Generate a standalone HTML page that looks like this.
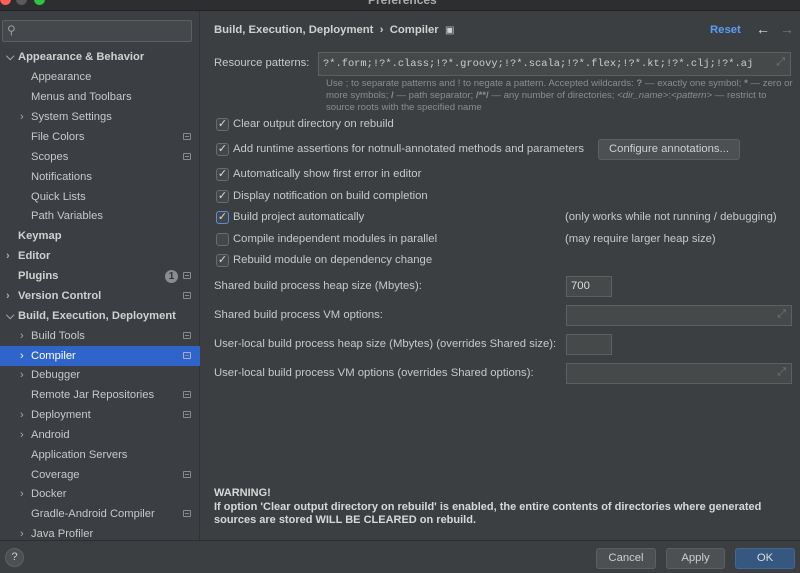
<!DOCTYPE html>
<html><head><style>
*{margin:0;padding:0;box-sizing:border-box}
body{width:800px;height:573px;overflow:hidden;background:#3c3f41;font-family:"Liberation Sans",sans-serif;font-size:11.3px;color:#bbbbbb;position:relative}
.a{position:absolute;white-space:nowrap}
#title{left:0;top:0;width:800px;height:11px;background:#2d2e30;border-bottom:1px solid #222;overflow:hidden}
#side{left:0;top:11px;width:200px;height:529px;background:#3b3e43;border-right:1px solid #323232}
.it{position:absolute;left:0;width:200px;height:20px;line-height:20px;font-size:11.2px;color:#c8c8c8}
.b{font-weight:bold;color:#d0d0d0}
.ic{position:absolute;right:9px;top:6px;width:8px;height:7px;border:1px solid #8a8a8a;border-radius:1px}
.ic:after{content:"";position:absolute;left:1px;top:2px;width:4px;height:1px;background:#8a8a8a}
.chev{position:absolute;font-size:11px;color:#aaa}
.cb{position:absolute;width:13px;height:13px;border:1px solid #6b6b6b;border-radius:3px;background:#43464a;color:#ddd;font-size:11px;line-height:11px;text-align:center}
.lbl{position:absolute;color:#c8c8c8;font-size:11.3px;white-space:nowrap}
.field{position:absolute;background:#45494a;border:1px solid #5e6060}
.btn{position:absolute;height:21px;border:1px solid #5e6060;background:#4c5052;border-radius:3px;color:#cfcfcf;text-align:center;line-height:19px;font-size:11.3px}
</style></head><body>
<div class="a" id="title">
<span class="a" style="left:0;top:-6px;width:11px;height:11px;border-radius:50%;background:#fe5f57"></span>
<span class="a" style="left:16px;top:-6px;width:11px;height:11px;border-radius:50%;background:#5a5a5c"></span>
<span class="a" style="left:34px;top:-6px;width:11px;height:11px;border-radius:50%;background:#28c840"></span>
<span class="a" style="left:368px;top:-7px;font-weight:bold;color:#aaa;font-size:12px">Preferences</span>
</div>
<div class="a" id="side">
<div class="a" style="left:2px;top:9px;width:190px;height:22px;border:1px solid #5e6060;background:#45484b;border-radius:2px"><span class="a" style="left:4px;top:2px;color:#999;font-size:12px">⚲</span></div>
</div>
<div class="it b" style="top:47px"><span class="chev" style="left:6px">⌵</span><span class="a" style="left:18px">Appearance &amp; Behavior</span></div>
<div class="it" style="top:67px"><span class="a" style="left:31px">Appearance</span></div>
<div class="it" style="top:87px"><span class="a" style="left:31px">Menus and Toolbars</span></div>
<div class="it" style="top:107px"><span class="chev" style="left:20px">›</span><span class="a" style="left:31px">System Settings</span></div>
<div class="it" style="top:127px"><span class="a" style="left:31px">File Colors</span><span class="ic"></span></div>
<div class="it" style="top:147px"><span class="a" style="left:31px">Scopes</span><span class="ic"></span></div>
<div class="it" style="top:167px"><span class="a" style="left:31px">Notifications</span></div>
<div class="it" style="top:187px"><span class="a" style="left:31px">Quick Lists</span></div>
<div class="it" style="top:206px"><span class="a" style="left:31px">Path Variables</span></div>
<div class="it b" style="top:226px"><span class="a" style="left:18px">Keymap</span></div>
<div class="it b" style="top:246px"><span class="chev" style="left:6px">›</span><span class="a" style="left:18px">Editor</span></div>
<div class="it b" style="top:266px"><span class="a" style="left:18px">Plugins</span><span class="a" style="left:165px;top:4px;width:13px;height:13px;border-radius:50%;background:#8a8d90;color:#333;font-size:10px;line-height:13px;text-align:center">1</span><span class="ic"></span></div>
<div class="it b" style="top:286px"><span class="chev" style="left:6px">›</span><span class="a" style="left:18px">Version Control</span><span class="ic"></span></div>
<div class="it b" style="top:306px"><span class="chev" style="left:6px">⌵</span><span class="a" style="left:18px">Build, Execution, Deployment</span></div>
<div class="it" style="top:326px"><span class="chev" style="left:20px">›</span><span class="a" style="left:31px">Build Tools</span><span class="ic"></span></div>
<div class="it" style="top:346px;background:#2f65ca;color:#fff"><span class="chev" style="left:20px;color:#fff">›</span><span class="a" style="left:31px">Compiler</span><span class="ic" style="border-color:#aac"></span></div>
<div class="it" style="top:365px"><span class="chev" style="left:20px">›</span><span class="a" style="left:31px">Debugger</span></div>
<div class="it" style="top:385px"><span class="a" style="left:31px">Remote Jar Repositories</span><span class="ic"></span></div>
<div class="it" style="top:405px"><span class="chev" style="left:20px">›</span><span class="a" style="left:31px">Deployment</span><span class="ic"></span></div>
<div class="it" style="top:425px"><span class="chev" style="left:20px">›</span><span class="a" style="left:31px">Android</span></div>
<div class="it" style="top:445px"><span class="a" style="left:31px">Application Servers</span></div>
<div class="it" style="top:465px"><span class="a" style="left:31px">Coverage</span><span class="ic"></span></div>
<div class="it" style="top:484px"><span class="chev" style="left:20px">›</span><span class="a" style="left:31px">Docker</span></div>
<div class="it" style="top:504px"><span class="a" style="left:31px">Gradle-Android Compiler</span><span class="ic"></span></div>
<div class="it" style="top:524px"><span class="chev" style="left:20px">›</span><span class="a" style="left:31px">Java Profiler</span></div>

<span class="a" style="left:214px;top:24px;font-weight:bold;color:#d0d0d0;font-size:11.3px">Build, Execution, Deployment&nbsp;&nbsp;›&nbsp;&nbsp;Compiler&nbsp;&nbsp;<span style="font-weight:normal;font-size:10px">▣</span></span>
<span class="a" style="left:710px;top:24px;font-weight:bold;color:#589df6">Reset</span>
<span class="a" style="left:756px;top:21px;color:#ddd;font-size:14px">←</span>
<span class="a" style="left:780px;top:21px;color:#777;font-size:14px">→</span>

<span class="lbl" style="left:214px;top:57px">Resource patterns:</span>
<div class="field" style="left:318px;top:52px;width:473px;height:24px;overflow:hidden"><span class="a" style="left:4px;top:5px;font-family:'Liberation Mono',monospace;font-size:10.4px;color:#ccc">?*.form;!?*.class;!?*.groovy;!?*.scala;!?*.flex;!?*.kt;!?*.clj;!?*.aj</span><span class="a" style="right:5px;top:3px;color:#777;font-size:11px">⤢</span></div>
<div class="a" style="left:326px;top:78px;font-size:9.6px;color:#8c8c8c;line-height:12px;white-space:normal;width:470px">Use ; to separate patterns and ! to negate a pattern. Accepted wildcards: <b>?</b> — exactly one symbol; <b>*</b> — zero or more symbols; <b>/</b> — path separator; <b>/**/</b> — any number of directories; <i>&lt;dir_name&gt;</i>:<i>&lt;pattern&gt;</i> — restrict to source roots with the specified name</div>

<span class="cb" style="left:216px;top:118px">✓</span><span class="lbl" style="left:233px;top:118px">Clear output directory on rebuild</span>
<span class="cb" style="left:216px;top:143px">✓</span><span class="lbl" style="left:233px;top:143px">Add runtime assertions for notnull-annotated methods and parameters</span>
<div class="btn" style="left:598px;top:139px;width:142px">Configure annotations...</div>
<span class="cb" style="left:216px;top:168px">✓</span><span class="lbl" style="left:233px;top:168px">Automatically show first error in editor</span>
<span class="cb" style="left:216px;top:190px">✓</span><span class="lbl" style="left:233px;top:190px">Display notification on build completion</span>
<span class="cb" style="left:216px;top:211px;border-color:#5a8fd8">✓</span><span class="lbl" style="left:233px;top:211px">Build project automatically</span>
<span class="lbl" style="left:565px;top:211px">(only works while not running / debugging)</span>
<span class="cb" style="left:216px;top:233px"></span><span class="lbl" style="left:233px;top:233px">Compile independent modules in parallel</span>
<span class="lbl" style="left:565px;top:233px">(may require larger heap size)</span>
<span class="cb" style="left:216px;top:254px">✓</span><span class="lbl" style="left:233px;top:254px">Rebuild module on dependency change</span>

<span class="lbl" style="left:214px;top:280px">Shared build process heap size (Mbytes):</span>
<div class="field" style="left:566px;top:276px;width:46px;height:21px"><span class="a" style="left:4px;top:3px;color:#ddd">700</span></div>
<span class="lbl" style="left:214px;top:309px">Shared build process VM options:</span>
<div class="field" style="left:566px;top:305px;width:226px;height:21px"><span class="a" style="right:5px;top:2px;color:#777;font-size:11px">⤢</span></div>
<span class="lbl" style="left:214px;top:338px">User-local build process heap size (Mbytes) (overrides Shared size):</span>
<div class="field" style="left:566px;top:334px;width:46px;height:21px"></div>
<span class="lbl" style="left:214px;top:367px">User-local build process VM options (overrides Shared options):</span>
<div class="field" style="left:566px;top:363px;width:226px;height:21px"><span class="a" style="right:5px;top:2px;color:#777;font-size:11px">⤢</span></div>

<div class="a" style="left:214px;top:487px;font-weight:bold;font-size:11px;color:#d8d8d8;line-height:13.5px">WARNING!<br>If option 'Clear output directory on rebuild' is enabled, the entire contents of directories where generated<br>sources are stored WILL BE CLEARED on rebuild.</div>

<div class="a" style="left:0;top:540px;width:800px;height:33px;background:#3c3f41;border-top:1px solid #2e2e2e"></div>
<span class="a" style="left:5px;top:548px;width:19px;height:19px;border-radius:50%;background:#4c5052;border:1px solid #5e6060;text-align:center;line-height:17px;color:#ccc">?</span>
<div class="btn" style="left:596px;top:548px;width:60px">Cancel</div>
<div class="btn" style="left:666px;top:548px;width:59px">Apply</div>
<div class="btn" style="left:735px;top:548px;width:60px;background:#365880;border-color:#43688f;color:#ddd">OK</div>
</body></html>
